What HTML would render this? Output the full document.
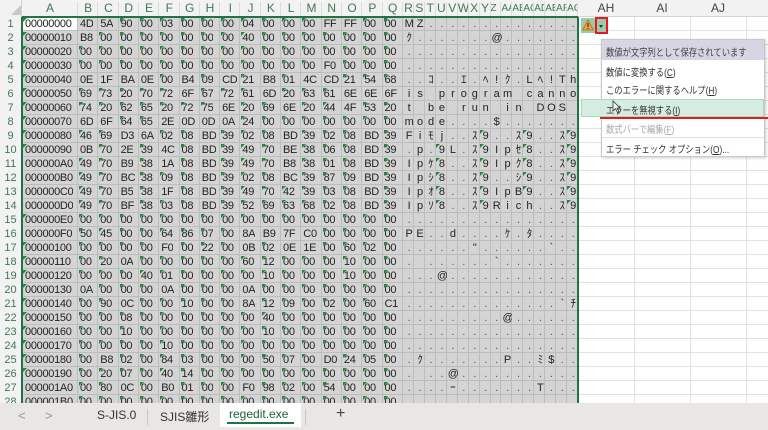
<!DOCTYPE html>
<html><head><meta charset="utf-8">
<style>
*{margin:0;padding:0;box-sizing:border-box}
body{width:768px;height:430px;overflow:hidden;background:#fff;position:relative;font-family:"Liberation Sans","Noto Sans CJK JP",sans-serif}
.a{position:absolute}
.c{position:absolute;font-size:11px;line-height:14px;color:#222;white-space:nowrap;overflow:hidden;font-family:"Liberation Sans","Noto Sans CJK JP",sans-serif;letter-spacing:-0.3px}
.t{position:absolute;width:0;height:0;border-top:4px solid #1f8a3c;border-right:4px solid transparent}
.hd{position:absolute;top:0;height:17px;font-size:12px;line-height:17px;text-align:center;color:#3d7a52;font-family:"Liberation Sans",sans-serif}
.rh{position:absolute;left:0;width:21px;height:14px;font-size:11px;line-height:14px;text-align:center;color:#3d7a52}
.mi{position:absolute;left:606px;font-size:10px;white-space:nowrap;color:#333;transform:scaleX(0.83);transform-origin:0 0;font-family:"Liberation Sans","Noto Sans CJK JP",sans-serif}
</style></head><body>
<div id="g"></div>
<script>
var rows=[
"4D5A90000300000004000000FFFF0000",
"B8000000000000004000000000000000",
"00000000000000000000000000000000",
"000000000000000000000000F0000000",
"0E1FBA0E00B409CD21B8014CCD215468",
"69732070726F6772616D2063616E6E6F",
"742062652072756E20696E20444F5320",
"6D6F64652E0D0D0A2400000000000000",
"4669D36A0208BD390208BD390208BD39",
"0B702E394C08BD394970BE380608BD39",
"4970B9381A08BD394970B8380108BD39",
"4970BC380908BD390208BC398709BD39",
"4970B5381F08BD39497042390308BD39",
"4970BF380308BD39526963680208BD39",
"00000000000000000000000000000000",
"50450000648607008AB97FC000000000",
"00000000F00022000B020E1E00600200",
"00200A00000000006012000000100000",
"00000040010000000010000000100000",
"0A0000000A0000000A00000000000000",
"00900C00001000008A120900020060C1",
"00000800000000000040000000000000",
"00001000000000000010000000000000",
"00000000100000000000000000000000",
"00B802008403000000500700D0240500",
"00200700401400000000000000000000",
"00800C00B0010000F098020054000000",
"00000000000000000000000000000000"];
var h='';
function X(i){
 if(i==0) return 22;
 if(i<=16) return 78+(i-1)*20.3;
 return 403+(i-17)*10.94;}
var cols=["A","B","C","D","E","F","G","H","I","J","K","L","M","N","O","P","Q","R","S","T","U","V","W","X","Y","Z","AA","AB","AC","AD","AE","AF","AG"];
h+='<div class="a" style="left:0;top:0;width:768px;height:17px;background:#f2f2f2;border-bottom:1px solid #d4d4d4"></div>';
h+='<div class="a" style="left:0;top:0;width:22px;height:403px;background:#f2f2f2;border-right:1px solid #d4d4d4"></div>';
h+='<div class="a" style="left:11px;top:5px;width:0;height:0;border-bottom:10px solid #c8c8c8;border-left:10px solid transparent"></div>';
h+='<div class="a" style="left:22px;top:17px;width:556px;height:386px;background:#d4d4d4"></div>';
for(var x=578;x<768;x+=56){h+='<div class="a" style="left:'+x+'px;top:17px;width:1px;height:386px;background:#e2e2e2"></div>';}
for(var r=0;r<28;r++){var y=17+r*14;
 h+='<div class="a" style="left:578px;top:'+(y+13)+'px;width:190px;height:1px;background:#e2e2e2"></div>';
 h+='<div class="a" style="left:22px;top:'+(y+13)+'px;width:556px;height:1px;background:#bdbdbd"></div>';
 h+='<div class="rh" style="top:'+y+'px">'+(r+1)+'</div>';}
for(var i=0;i<33;i++){var x=X(i),w=(i==0?56:(i<=16?20.3:10.94));
 h+='<div class="a" style="left:'+(x+w-1)+'px;top:17px;width:1px;height:386px;background:#bdbdbd"></div>';
 h+='<div class="hd" style="left:'+x+'px;width:'+w+'px;'+(i>=25?'font-size:10px;overflow:hidden;text-align:left;':'')+'">'+cols[i]+'</div>';
 h+='<div class="a" style="left:'+(x+w-1)+'px;top:2px;width:1px;height:15px;background:#dcdcdc"></div>';}
[["AH",606],["AI",662],["AJ",718]].forEach(function(c){h+='<div class="hd" style="left:'+(c[1]-20)+'px;width:40px;color:#444">'+c[0]+'</div>';});
h+='<div class="a" style="left:22px;top:16px;width:556px;height:2px;background:#217346"></div>';
h+='<div class="a" style="left:23px;top:18px;width:54px;height:12px;background:#fff"></div>';
function num(s){return /^\d+$/.test(s)||/^\d+E\d+$/.test(s);}
function ch(b){if(b==0x20)return ' ';if(b>0x20&&b<0x7f)return String.fromCharCode(b);if(b>=0xA1&&b<=0xDF)return String.fromCharCode(0xFF61+b-0xA1);return '.';}
for(var r=0;r<28;r++){var y=17+r*14,s=rows[r];
 var a=(r*16).toString(16).toUpperCase();while(a.length<8)a='0'+a;
 h+='<div class="c" style="left:25px;top:'+y+'px">'+a+'</div>';
 if(num(a))h+='<div class="t" style="left:23px;top:'+(y+1)+'px"></div>';
 for(var j=0;j<16;j++){var v=s.substr(j*2,2),x=X(j+1);
  h+='<div class="c" style="left:'+(x+2)+'px;top:'+y+'px">'+v+'</div>';
  if(num(v))h+='<div class="t" style="left:'+(x+1)+'px;top:'+(y+1)+'px"></div>';
  var c=ch(parseInt(v,16));x=X(j+17);
  h+='<div class="c" style="left:'+(x+1)+'px;top:'+y+'px;width:10px;text-align:center;'+(c=='.'?'color:#555;':'')+'">'+(c=='.'?'.':c.replace('&','&amp;').replace('<','&lt;'))+'</div>';
  if(/\d/.test(c))h+='<div class="t" style="left:'+(x)+'px;top:'+(y+1)+'px"></div>';}}
h+='<div class="a" style="left:21px;top:17px;width:2px;height:386px;background:#217346"></div>';
h+='<div class="a" style="left:577px;top:17px;width:2px;height:386px;background:#217346"></div>';
document.getElementById('g').innerHTML=h;
</script>
<div class="a" style="left:581px;top:18px;width:14px;height:15px;background:#9cc9a8"></div>
<svg class="a" style="left:582px;top:19px" width="12" height="12"><polygon points="6,1 11.5,11 0.5,11" fill="#e8a33c" stroke="#b3701a" stroke-width="0.8"/><rect x="5.4" y="4" width="1.2" height="4" fill="#5a3a10"/><rect x="5.4" y="9" width="1.2" height="1.2" fill="#5a3a10"/></svg>
<div class="a" style="left:595px;top:17px;width:13px;height:17px;border:2px solid #e21b23;background:#9cc9a8"></div>
<div class="a" style="left:599px;top:25px;width:0;height:0;border-left:2.5px solid transparent;border-right:2.5px solid transparent;border-top:3px solid #333"></div>
<div class="a" style="left:601px;top:39px;width:164px;height:118px;background:#fff;border:1px solid #c8c8c8;box-shadow:1px 1px 3px rgba(0,0,0,.2)"></div>
<div class="a" style="left:602px;top:40px;width:162px;height:20px;background:#d6d5e3"></div>
<div class="mi" style="top:44px;color:#444">数値が文字列として保存されています</div>
<div class="mi" style="top:64px">数値に変換する(<u>C</u>)</div>
<div class="mi" style="top:82px">このエラーに関するヘルプ(<u>H</u>)</div>
<div class="a" style="left:581px;top:99px;width:183px;height:18px;background:#d5ede0;border:1px solid #a9d8bb"></div>
<div class="mi" style="top:102px">エラーを無視する(<u>I</u>)</div>
<svg class="a" style="left:612px;top:100px" width="9" height="13"><path d="M1 1 L1 11 L3.5 8.5 L5.5 12.5 L7 11.8 L5 8 L8 8 Z" fill="#fff" stroke="#333" stroke-width="0.8"/></svg>
<div class="a" style="left:600px;top:117px;width:168px;height:2px;background:#e21b23"></div>
<div class="mi" style="top:121px;color:#aaa">数式バーで編集(<u>F</u>)</div>
<div class="a" style="left:602px;top:137px;width:162px;height:1px;background:#e0e0e0"></div>
<div class="mi" style="top:141px">エラー チェック オプション(<u>O</u>)...</div>
<div class="a" style="left:0;top:403px;width:768px;height:27px;background:#e9e7e4"></div>
<div class="a" style="left:18px;top:408px;font-size:13px;color:#999">&lt;</div>
<div class="a" style="left:45px;top:408px;font-size:13px;color:#999">&gt;</div>
<div class="a" style="left:147px;top:409px;width:1px;height:16px;background:#c8c8c8"></div>
<div class="a" style="left:97px;top:408px;font-size:12px;color:#333">S-JIS.0</div>
<div class="a" style="left:160px;top:408px;font-size:12px;color:#333;font-family:'Liberation Sans','Noto Sans CJK JP',sans-serif">SJIS雛形</div>
<div class="a" style="left:220px;top:403px;width:81px;height:24px;background:#fff"></div>
<div class="a" style="left:229px;top:407px;font-size:12px;color:#1e5e38">regedit.exe</div>
<div class="a" style="left:227px;top:422px;width:67px;height:2px;background:#217346"></div>
<div class="a" style="left:305px;top:409px;width:1px;height:16px;background:#c8c8c8"></div>
<div class="a" style="left:336px;top:405px;font-size:16px;color:#444">+</div>
</body></html>
